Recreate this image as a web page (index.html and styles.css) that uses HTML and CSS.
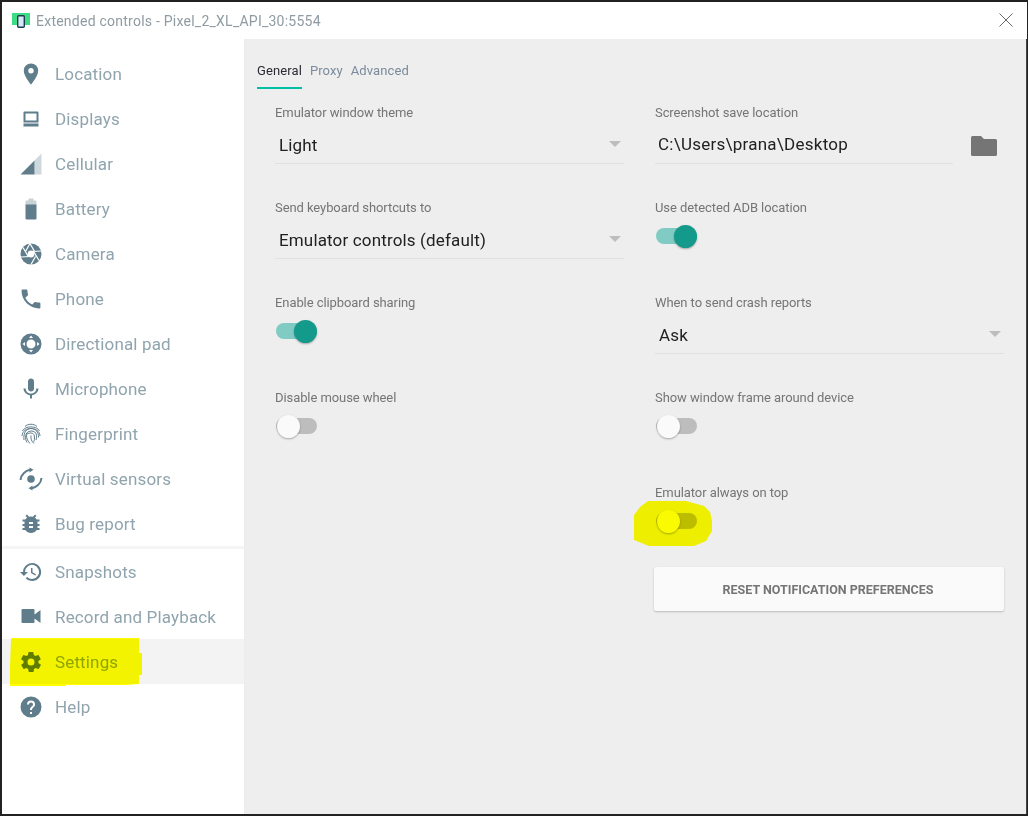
FILE: index.html
```html
<!DOCTYPE html>
<html lang="en">
<head>
<meta charset="utf-8">
<title>Extended controls</title>
<link rel="stylesheet" href="styles.css">
</head>
<body>
<div class="window">
  <header class="titlebar">
    <svg class="app-icon" width="18" height="15" viewBox="0 0 18 15"><rect width="18" height="12" fill="#3ddc84"/><rect x="5.700" y="2.700" width="6.600" height="11.600" rx="1" fill="#d3e9fb" stroke="#1c3a4a" stroke-width="1.400"/></svg>
    <span class="title">Extended controls - Pixel_2_XL_API_30:5554</span>
    <svg class="close" width="14" height="14" viewBox="0 0 14 14"><path d="M.5.5l13 13M13.5.5l-13 13" stroke="#666" stroke-width="1" fill="none"/></svg>
  </header>
  <div class="body">
    <nav class="sidebar">
      <div class="group">
        <div class="item"><svg class="ico" viewBox="0 0 24 24"><path d="M12 1.500C8.100 1.500 4.800 4.600 4.800 8.700c0 5.400 7.200 13.800 7.200 13.800s7.200-8.400 7.200-13.800c0-4.100-3.300-7.200-7.200-7.200zm0 10a2.700 2.700 0 1 1 0-5.400 2.700 2.700 0 0 1 0 5.400z"/></svg><span>Location</span></div>
        <div class="item"><svg class="ico" viewBox="0 0 24 24"><path fill-rule="evenodd" d="M5.500 4.500h13a1 1 0 0 1 1 1v10h-15v-10a1 1 0 0 1 1-1zm1 2v7h11v-7zM4.500 16.500h15v3h-15z"/></svg><span>Displays</span></div>
        <div class="item"><svg class="ico" viewBox="0 0 24 24"><path d="M15.500 8.500l7-7v21h-7z" opacity=".3"/><path d="M1.500 22.500l14-14v14z"/></svg><span>Cellular</span></div>
        <div class="item"><svg class="ico" viewBox="0 0 24 24"><path d="M9.500 1.500h5v2h2a1 1 0 0 1 1 1v3.500h-11V4.500a1 1 0 0 1 1-1h2z" opacity=".35"/><path d="M6.500 7.500h11v14a1 1 0 0 1-1 1h-9a1 1 0 0 1-1-1z"/></svg><span>Battery</span></div>
        <div class="item"><svg class="ico" viewBox="0 0 24 24"><circle cx="12" cy="12" r="10.500"/><path d="M11 1.500l4.500 8M22 9l-9 .5M20 18.500l-5-8.500M12 22.500l4.500-8M2 15l9-.5M4 5.500l5 8.500M11 1.500 6.500 9.500" stroke="#fff" stroke-width="1.200" fill="none"/><circle cx="12" cy="12" r="3.400" fill="#fff"/></svg><span>Camera</span></div>
        <div class="item"><svg class="ico" viewBox="0 0 24 24"><path d="M6.300 10.700c1.400 2.900 3.900 5.300 6.900 6.900l2.300-2.300c.3-.3.700-.4 1.100-.3 1.100.4 2.400.6 3.700.6.600 0 1.100.5 1.100 1.100v3.700c0 .6-.5 1.100-1.100 1.100C10.500 21.500 2.500 13.500 2.500 3.600c0-.6.500-1.100 1.100-1.100h3.700c.6 0 1.100.5 1.100 1.100 0 1.300.2 2.600.6 3.700.1.400 0 .8-.3 1.100z"/></svg><span>Phone</span></div>
        <div class="item"><svg class="ico" viewBox="0 0 24 24"><path fill-rule="evenodd" d="M12 1.500a10.500 10.500 0 1 1 0 21 10.500 10.500 0 0 1 0-21zm0 6a4.500 4.500 0 1 0 0 9 4.500 4.500 0 0 0 0-9z"/><path d="M12 3.500l2 2.500h-4zM12 20.500l-2-2.500h4zM3.500 12l2.500-2v4zM20.500 12l-2.500 2v-4z" fill="#fff"/></svg><span>Directional pad</span></div>
        <div class="item"><svg class="ico" viewBox="0 0 24 24"><path d="M12 14.500c1.700 0 3-1.300 3-3v-7c0-1.700-1.300-3-3-3s-3 1.300-3 3v7c0 1.700 1.300 3 3 3z"/><path d="M17.300 11.500c0 3-2.500 5.100-5.300 5.100s-5.300-2.100-5.300-5.100H4.500c0 3.400 3.200 6.200 6.500 6.700v3.300h2v-3.300c3.300-.5 6.500-3.300 6.500-6.700z"/></svg><span>Microphone</span></div>
        <div class="item"><svg class="ico ico-line" viewBox="0 0 24 24"><path d="M6 4.500c3-3 9-3 12 0M3.500 9c2.500-5.500 14.500-5.500 17 0M3 14c.5-10 17.500-10 18 0M5 18c-1-8 3-11.500 7-11.500s8 3.500 7.500 9M8 20.500c-2-3-3-11 4-11.500 6.500 0 6 6 5 9M11 21.500c-2-2-3.500-5-3.500-8 0-2 2-2.500 4.500-2.500 3 0 3.500 2.500 3.500 5 0 2-.5 3.500-1 4M12 13.500c-.5 3 .5 6 3 8"/></svg><span>Fingerprint</span></div>
        <div class="item"><svg class="ico ico-line" viewBox="0 0 24 24"><circle class="solid" cx="12" cy="12" r="3.800"/><path class="arc" d="M1.500 13C2 7 7 3.500 11 2.800M22.500 11C22 17 17 20.500 13 21.200"/><path class="solid" d="M10.500 .5l4 2.300-4 2.700zM13.500 18.500l-4 2.700 4 2.300z"/></svg><span>Virtual sensors</span></div>
        <div class="item"><svg class="ico" viewBox="0 0 24 24"><path fill-rule="evenodd" d="M20.500 7.500H17.700a6 6 0 0 0-1.800-2l1.600-1.600-1.400-1.400-2.200 2.200a6 6 0 0 0-3.800 0L7.900 2.500 6.500 3.900 8.100 5.500a6 6 0 0 0-1.800 2H3.500v2h2.100a6 6 0 0 0-.1 1v1.500h-2v2h2v1c0 .3 0 .7.100 1H3.500v2h2.800a7 7 0 0 0 11.400 0h2.800v-2h-2.100c.1-.3.100-.7.100-1v-1h2v-2h-2v-1.500c0-.3 0-.7-.1-1h2.100zM14 16h-4v-2h4zm0-4h-4v-2h4z"/></svg><span>Bug report</span></div>
      </div>
      <div class="divider"></div>
      <div class="group">
        <div class="item"><svg class="ico" viewBox="0 0 24 24"><path d="M13 3a9 9 0 0 0-9 9H1l3.900 3.900L9 12H6a7 7 0 1 1 2.100 4.900l-1.400 1.400A9 9 0 1 0 13 3zm-1 5v5l4.300 2.500.7-1.200-3.500-2.100V8z"/></svg><span>Snapshots</span></div>
        <div class="item"><svg class="ico" viewBox="0 0 24 24"><path d="M15.500 9.500l6-4.500v13l-6-4.500V17a1 1 0 0 1-1 1h-11a1 1 0 0 1-1-1V5a1 1 0 0 1 1-1h11a1 1 0 0 1 1 1z"/></svg><span>Record and Playback</span></div>
        <div class="item active"><svg class="ico" viewBox="0 0 24 24"><path d="M19.400 13c.1-.3.100-.7.100-1s0-.7-.1-1l2.100-1.600c.2-.2.300-.4.100-.6l-2-3.500c-.1-.2-.4-.3-.6-.2l-2.500 1c-.5-.4-1.100-.7-1.700-1l-.4-2.600c0-.3-.2-.5-.5-.5h-4c-.3 0-.5.200-.5.500l-.4 2.600c-.6.300-1.200.6-1.700 1l-2.500-1c-.2-.1-.5 0-.6.200l-2 3.500c-.1.200-.1.400.1.600L4.600 11c-.1.300-.1.700-.1 1s0 .7.100 1l-2.100 1.600c-.2.200-.3.400-.1.600l2 3.500c.1.200.4.300.6.200l2.500-1c.5.400 1.100.7 1.700 1l.4 2.600c0 .3.200.5.500.5h4c.3 0 .5-.2.500-.5l.4-2.600c.6-.3 1.200-.6 1.700-1l2.500 1c.2.100.5 0 .6-.2l2-3.500c.1-.2.100-.4-.1-.6zM12 15.500a3.500 3.500 0 1 1 0-7 3.500 3.500 0 0 1 0 7z"/></svg><span>Settings</span></div>
        <div class="item"><svg class="ico" viewBox="0 0 24 24"><path fill-rule="evenodd" d="M12 1.500a10.500 10.500 0 1 1 0 21 10.500 10.500 0 0 1 0-21zM11 17v2h2v-2zM12 5.500a4 4 0 0 0-4 4h2a2 2 0 1 1 4 0c0 2-3 1.800-3 5.500h2c0-2.500 3-2.800 3-5.500a4 4 0 0 0-4-4z"/></svg><span>Help</span></div>
      </div>
    </nav>
    <main class="content">
      <div class="tabs">
        <div class="tab current">General</div>
        <div class="tab">Proxy</div>
        <div class="tab">Advanced</div>
      </div>
      <div class="form">
        <div class="col">
          <div class="field"><label>Emulator window theme</label><div class="select"><span>Light</span><i class="caret"></i></div></div>
          <div class="field"><label>Send keyboard shortcuts to</label><div class="select"><span>Emulator controls (default)</span><i class="caret"></i></div></div>
          <div class="field"><label>Enable clipboard sharing</label><div class="toggle on"><i></i></div></div>
          <div class="field"><label>Disable mouse wheel</label><div class="toggle"><i></i></div></div>
        </div>
        <div class="col">
          <div class="field"><label>Screenshot save location</label>
            <div class="path-row"><div class="path">C:\Users\prana\Desktop</div>
            <svg class="folder" width="26" height="20" viewBox="0 0 26 20"><path d="M1.500 0H10l3 3h11.500A1.500 1.500 0 0 1 26 4.500v14a1.500 1.500 0 0 1-1.500 1.500h-23A1.500 1.500 0 0 1 0 18.500v-17A1.500 1.500 0 0 1 1.500 0z" fill="#757575"/></svg></div>
          </div>
          <div class="field"><label>Use detected ADB location</label><div class="toggle on"><i></i></div></div>
          <div class="field"><label>When to send crash reports</label><div class="select"><span>Ask</span><i class="caret"></i></div></div>
          <div class="field"><label>Show window frame around device</label><div class="toggle"><i></i></div></div>
          <div class="field"><label>Emulator always on top</label><div class="toggle"><i></i></div></div>
          <button class="reset">RESET NOTIFICATION PREFERENCES</button>
        </div>
      </div>
    </main>
  </div>
  <svg class="marker marker-settings" width="134" height="50" viewBox="0 0 134 50"><path d="M1 0H129V15H132V37H129V46L115 47H55V48H0V28z"/></svg>
  <svg class="marker marker-toggle" width="78" height="46" viewBox="0 0 78 46"><path d="M14 0H52L70 5 76 11 78 20V30L72 40 60 45H15L0 39V14L6 6z"/></svg>
</div>
</body>
</html>
```
FILE: styles.css
```css
* { box-sizing: border-box; }
html, body { margin: 0; height: 100%; }
body { width: 1028px; height: 816px; overflow: hidden; background: #222; font-family: Roboto, "Liberation Sans", sans-serif; }
.window { position: relative; margin: 2px 1px 2px 2px; height: 812px; background: #fff; display: flex; flex-direction: column; }
.titlebar { height: 37px; flex: none; display: flex; align-items: center; padding: 0 14px 0 10px; background: #fff; }
.app-icon { margin-right: 6px; }
.title { font-size: 14px; color: #8f9ba3; letter-spacing: .24px; flex: 1; }
.close { margin-top: -1px; }
.body { flex: 1; display: flex; min-height: 0; }
.sidebar { width: 242px; flex: none; padding-top: 12px; background: #fff; }
.item { height: 45px; display: flex; align-items: center; padding-left: 16.500px; color: #90a4ae; font-size: 17px; letter-spacing: .15px; }
.item.active { background: #f3f3f3; }
.item span { margin-left: 12.500px; }
.ico { width: 24px; height: 24px; fill: #607d8b; flex: none; }
.ico-line { fill: none; stroke: #607d8b; stroke-width: 1; }
.ico-line .solid { fill: #607d8b; stroke: none; }
.ico-line .arc { stroke-width: 2; }
.divider { height: 3px; background: #f5f5f5; }
.content { flex: 1; background: #eee; padding: 0 0 0 13px; border-right: 1px solid #444; box-shadow: inset 1px 0 1px -1px #ddd; }
.tabs { display: flex; gap: 8px; padding-top: 21px; height: 50px; }
.tab { height: 29px; padding-top: 3px; font-size: 13px; color: #7b8b9c; line-height: 16px; letter-spacing: .1px; }
.tab.current { color: #2b2b33; border-bottom: 2px solid #00bfa5; }
.form { display: flex; gap: 31px; padding-left: 18px; padding-top: 16px; }
.col { width: 349px; flex: none; }
.field { height: 95px; }
label { display: block; font-size: 13px; line-height: 16px; color: #757575; letter-spacing: -.08px; }
.select { margin-top: 5px; height: 38px; border-bottom: 1px solid #e0e0e0; display: flex; align-items: center; justify-content: space-between; padding: 0 3px 0 4px; font-size: 17px; letter-spacing: .15px; color: #212121; }
.caret { width: 0; height: 0; border-left: 6.500px solid transparent; border-right: 6.500px solid transparent; border-top: 6.500px solid #bdbdbd; margin-top: -2px; }
.path-row { display: flex; align-items: flex-start; margin-top: 5px; }
.path { width: 298px; height: 38px; border-bottom: 1px solid #e0e0e0; line-height: 37px; padding-left: 3px; font-size: 17px; color: #212121; letter-spacing: .25px; }
.folder { margin-left: 18px; margin-top: 10px; }
.toggle { position: relative; margin-top: 12px; width: 41px; height: 16px; margin-left: 1px; border-radius: 8px; background: #bdbdbd; }
.toggle i { position: absolute; left: 1px; top: -3px; width: 23px; height: 23px; border-radius: 50%; background: #fafafa; box-shadow: 0 1px 2px rgba(0,0,0,.3); }
.toggle.on { background: #80cbc4; }
.toggle.on i { left: 18px; background: #149a8b; }
.reset { display: block; width: 350px; height: 44px; margin: -13px 0 0 -1px; padding: 0 2px 0 0; border: 0; border-radius: 2px; background: #fafafa; box-shadow: 0 1px 2px rgba(0,0,0,.22); font-family: inherit; font-weight: 700; font-size: 12.500px; color: #757575; }
.marker { position: absolute; fill: #ffff00; mix-blend-mode: multiply; }
.marker-settings { left: 8px; top: 636px; }
.marker-toggle { left: 632px; top: 499px; }
```
